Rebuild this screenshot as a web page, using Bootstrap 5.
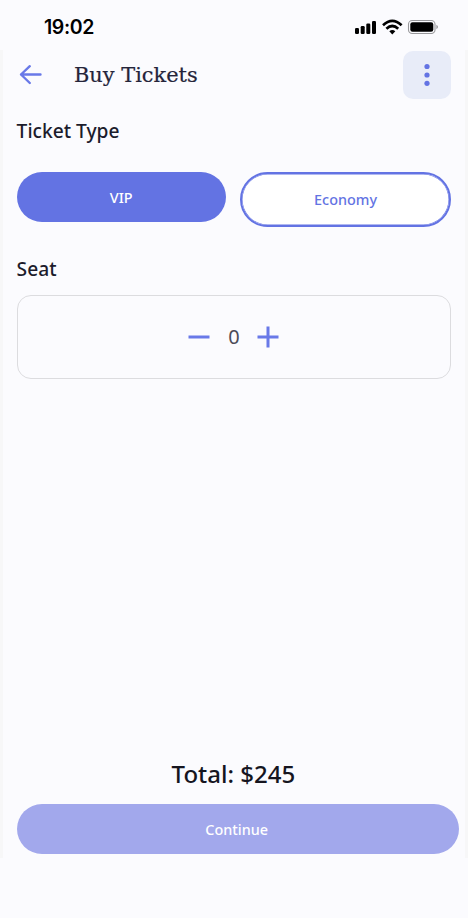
<!DOCTYPE html>
<html lang="en">
<head>
<meta charset="utf-8">
<meta name="viewport" content="width=device-width, initial-scale=1">
<title>Buy Tickets</title>
<link href="https://cdn.jsdelivr.net/npm/bootstrap@5.3.0/dist/css/bootstrap.min.css" rel="stylesheet">
<style>
body { background: #fbfbfe; font-family: "Noto Sans", sans-serif; color: #1c1c2c; }
.phone { height: 918px; }
.status-bar { height: 50px; padding: 4px 29px 0 44px; color: #000; }
.clock { font: 600 19.5px/1 Inter, sans-serif; letter-spacing: -.4px; padding-top: 2px; }
.screen { height: 808px; padding: 1px 13.800px 4px 13.600px; border: solid #f7f7f8; border-width: 0 3px; }
.top-bar { height: 48px; }
.page-title { font: 400 20.9px/1 "DejaVu Serif", serif; margin: 1px 0 0 32.400px; color: #24243a; -webkit-text-stroke: .2px #24243a; }
.menu-btn { width: 48px; height: 48px; border-radius: 10px; background: #e8ecf8; }
.label { font-size: 19.2px; line-height: 26px; font-weight: 500; }
.label-first { margin-top: 19px; }
.label-seat { margin-top: 29px; }
.pill { border-radius: 28px; font-size: 14.4px; line-height: 20px; font-weight: 500; padding: 1px 0 0; border: 0; }
.pill-solid, .pill-solid:hover { background: #6373e3; color: #fff; height: 50px; }
.pill-line, .pill-line:hover { background: #fff; color: #6373e3; height: 55px; border: 2px solid #6373e3; box-shadow: inset 0 0 0 .5px #6373e3; }
.choices { gap: 14px; margin-top: 28px; }
.seat-box { height: 84px; border: 1.5px solid #dcdcdf; border-radius: 14px; margin-top: 13px; }
.count { font-size: 20px; line-height: 24px; width: 47px; color: #4c4c58; }
.total { font-size: 24px; line-height: 32px; font-weight: 500; color: #15151f; margin-right: 1px; }
.pill-muted, .pill-muted:hover { background: #a2a8ec; color: #fff; height: 50px; margin: 14px -7.500px 0 0; padding: 1px 2px 0 0; }
</style>
<script src="https://cdn.jsdelivr.net/npm/bootstrap@5.3.0/dist/js/bootstrap.bundle.min.js"></script>
</head>
<body>
<div class="phone">
  <header class="status-bar d-flex align-items-center justify-content-between">
    <span class="clock">19:02</span>
    <svg width="84" height="18" viewBox="0 0 84 18" aria-hidden="true">
      <rect x="0" y="10" width="4" height="6" rx="1.2"/><rect x="5.7" y="8" width="4" height="8" rx="1.2"/><rect x="11.3" y="5.5" width="4" height="10.500" rx="1.2"/><rect x="17" y="3" width="4" height="13" rx="1.2"/>
      <g fill="none" stroke="#000" stroke-width="2.7"><path d="M28 7.200Q37.300-1.400 46.600 7.200"/><path d="M31.400 10.700Q37.300 5.300 43.200 10.700"/></g>
      <path d="M34.300 13.300Q37.300 10.900 40.300 13.300L37.300 16.600Z"/>
      <rect x="53.500" y="2.500" width="26.500" height="13" rx="3.700" fill="none" stroke="#98989b" stroke-width="1.100"/><rect x="55.300" y="4.300" width="23" height="9.400" rx="2.200"/><path d="M81.400 6.800Q84.600 9 81.400 11.200Z" fill="#98989b"/>
    </svg>
  </header>
  <main class="screen d-flex flex-column">
    <div class="top-bar d-flex align-items-center">
      <svg class="ms-1" width="21" height="20" viewBox="1 0 21 20" fill="none" stroke="#6979e8" stroke-width="2.400" stroke-linecap="round" stroke-linejoin="round" overflow="visible" aria-label="Back"><path d="M20.500 9.500H1M9.800 1.200L1 9.500L9.800 18"/></svg>
      <h1 class="page-title">Buy Tickets</h1>
      <button class="menu-btn btn border-0 p-0 ms-auto d-flex align-items-center justify-content-center" aria-label="More">
        <svg width="6" height="24" viewBox="0 0 6 24" fill="#6373e3"><circle cx="3" cy="3.500" r="2.600"/><circle cx="3" cy="12" r="2.600"/><circle cx="3" cy="20.300" r="2.600"/></svg>
      </button>
    </div>
    <h2 class="label label-first mb-0">Ticket Type</h2>
    <div class="choices d-flex align-items-start">
      <button class="btn pill pill-solid w-100">VIP</button>
      <button class="btn pill pill-line w-100">Economy</button>
    </div>
    <h2 class="label label-seat mb-0">Seat</h2>
    <div class="seat-box d-flex align-items-center justify-content-center">
      <svg width="22" height="22" viewBox="0 0 22 22" stroke="#6979e8" stroke-width="3" aria-label="Decrease"><path d="M.5 11H21.500"/></svg>
      <span class="count text-center">0</span>
      <svg width="22" height="22" viewBox="0 0 22 22" stroke="#6979e8" stroke-width="3" aria-label="Increase"><path d="M.5 11H21.500M11 .5V21.500"/></svg>
    </div>
    <div class="total text-center mt-auto">Total: $245</div>
    <button class="btn pill pill-muted">Continue</button>
  </main>
</div>
</body>
</html>
